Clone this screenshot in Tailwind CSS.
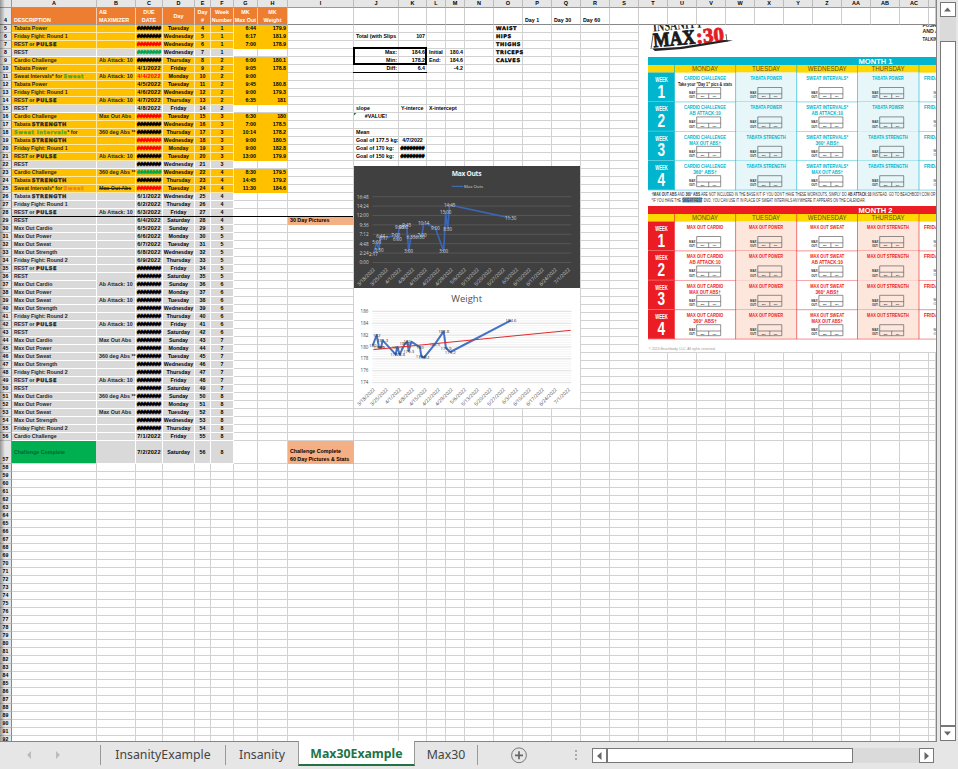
<!DOCTYPE html>
<html lang="en">
<head>
<meta charset="utf-8">
<title>Max30Example</title>
<script src="https://cdn.jsdelivr.net/npm/@tailwindcss/browser@4"></script>
</head>
<body class="w-[958px] h-[769px] overflow-hidden bg-[#e6e6e6] font-['Liberation_Sans',sans-serif]">
<div class="flex flex-col w-[958px] h-[769px] relative">
  <div class="flex h-[742px]">
    <main class="relative w-[937px] h-[742px] bg-white overflow-hidden border-r border-b border-[#868686]">
      <div id="sheet" class="flex flex-col w-[936px] text-[5.3px] leading-[7px] font-bold text-black"></div>
      <div class="absolute left-[12px] top-[216px] w-[341px] h-px bg-black"></div>
      <div class="absolute left-[353px] top-[47px] w-[74px] h-[18px] border-2 border-black"></div>
      <div class="absolute left-[353px] top-[72px] w-[74px] h-px bg-black"></div>
      <svg class="absolute left-[354px] top-[113px]" width="3" height="3"><path d="M0 0H2.5L0 2.5Z" fill="#16803a"/></svg>
      <svg id="maxouts" class="absolute left-[354px] top-[166px]" width="226" height="122" viewBox="12 18 678 366" font-family="Open Sans, sans-serif"></svg>
      <svg id="weight" class="absolute left-[354px] top-[288px]" width="226" height="120" viewBox="12 9 678 360" font-family="Open Sans, sans-serif"></svg>
      <svg id="calendar" class="absolute left-[639px] top-[25px]" width="297" height="327" viewBox="639 25 297 327" font-family="Liberation Sans Narrow, Liberation Sans, sans-serif"></svg>
      <div class="absolute left-0 top-0 w-[5px] h-[742px] bg-gradient-to-r from-black/35 to-transparent"></div>
    </main>
    <aside class="flex flex-col w-[21px] pl-[3px] pt-[2px] pr-[2px] bg-[#e6e6e6]">
      <div class="flex items-center justify-center w-[16px] h-[15px] bg-white border border-[#777]"><svg width="8" height="5"><path d="M0 4.5L3.5 0.5L7 4.5Z" fill="#666"/></svg></div>
      <div class="w-[16px] h-[24px] bg-[#dadada]"></div>
      <div class="w-[16px] h-[685px] bg-white border border-[#777]"></div>
      <div class="flex items-center justify-center w-[16px] h-[15px] bg-white border border-[#777]"><svg width="8" height="5"><path d="M0 0.5L3.5 4.5L7 0.5Z" fill="#666"/></svg></div>
    </aside>
  </div>
  <footer class="relative z-10 flex h-[27px] bg-[#e6e6e6] font-['Noto_Sans',sans-serif] text-[12.3px] leading-[25px] text-[#444]">
    <div class="flex items-start pt-[9px] pl-[26px] w-[100px] gap-[23px]">
      <svg width="6" height="8"><path d="M5 0V8L1 4Z" fill="#bbb"/></svg>
      <svg width="6" height="8"><path d="M1 0V8L5 4Z" fill="#bbb"/></svg>
    </div>
    <div class="mt-[3px] h-[20px] w-px bg-[#999]"></div>
    <div class="w-[124px] flex justify-center whitespace-nowrap">InsanityExample</div>
    <div class="mt-[3px] h-[20px] w-px bg-[#999]"></div>
    <div class="w-[72px] flex justify-center whitespace-nowrap">Insanity</div>
    <div class="-mt-px w-[117px] h-[25px] bg-white border-x border-x-[#999] border-b-2 border-b-[#217346] flex justify-center whitespace-nowrap text-[#217346] font-bold">Max30Example</div>
    <div class="w-[62px] flex justify-center whitespace-nowrap">Max30</div>
    <div class="mt-[3px] h-[20px] w-px bg-[#999]"></div>
    <div class="pt-[5px] pl-[32px] w-[92px]"><svg width="18" height="17"><circle cx="9" cy="8.3" r="7.4" fill="none" stroke="#777"/><path d="M9 4.3V12.3M5 8.3H13" stroke="#666" stroke-width="1.7"/></svg></div>
    <div class="flex flex-col gap-[2px] pt-[8px] pl-[5px] w-[22px]"><i class="size-[2px] bg-[#aaa]"></i><i class="size-[2px] bg-[#aaa]"></i><i class="size-[2px] bg-[#aaa]"></i></div>
    <div class="flex mt-[6px] h-[15px]">
      <div class="flex items-center justify-center w-[15px] h-[15px] bg-white border border-[#777]"><svg width="5" height="8"><path d="M4.5 0V8L0 4Z" fill="#666"/></svg></div>
      <div class="w-[246px] h-[15px] bg-white border border-[#777]"></div>
      <div class="w-[66px] h-[15px] bg-[#dadada]"></div>
      <div class="flex items-center justify-center w-[15px] h-[15px] bg-white border border-[#777]"><svg width="5" height="8"><path d="M0.5 0V8L5 4Z" fill="#666"/></svg></div>
    </div>
  </footer>
</div>
<script>
const names = 'A B C D E F G H I J K L M N O P Q R S T U V W X Y Z AA AB AC'.split(' ').concat('');
const GRID = 'grid grid-cols-[12px_85px_39px_27px_32px_16px_23px_24px_30px_66px_45px_28px_19px_19px_repeat(16,29px)_7px] shrink-0 ';
const sheet = document.getElementById('sheet');
const HASH = '<span class="text-[5.3px] tracking-[0.05px] [-webkit-text-stroke:0.45px_currentColor]">########</span>';
const L = 'justify-start pl-[2px] ', C = 'justify-center ', R = 'justify-end pr-px ';
const bold = (t, c) => `<b class="font-['DejaVu_Sans'] font-bold text-[5.1px] tracking-[0.55px] [-webkit-text-stroke:0.3px_currentColor] ${c || ''}">${t}</b>`;
const desc = {5:'Tabata Power',6:'Friday Fight: Round 1',7:'REST or&nbsp;'+bold('PULSE'),8:'REST',9:'Cardio Challenge',10:'Tabata Power',
 11:"Sweat Intervals* for&nbsp;"+bold('Sweat','text-[#4aa52e]'),12:'Tabata Power',13:'Friday Fight: Round 1',14:'REST or&nbsp;'+bold('PULSE'),15:'REST',
 16:'Cardio Challenge',17:'Tabata&nbsp;'+bold('STRENGTH'),18:bold('Sweat Intervals','text-[#4aa52e]')+'* for',19:'Tabata&nbsp;'+bold('STRENGTH'),
 20:'Friday Fight: Round 1',21:'REST or&nbsp;'+bold('PULSE'),22:'REST',23:'Cardio Challenge',24:'Tabata&nbsp;'+bold('STRENGTH'),
 25:"Sweat Intervals* for&nbsp;"+bold('Sweat','text-[#ed7d31]'),26:'Tabata&nbsp;'+bold('STRENGTH'),27:'Friday Fight: Round 1',28:'REST or&nbsp;'+bold('PULSE'),29:'REST',56:'Cardio Challenge',57:'Challenge Complete'};
const cycle = ['Max Out Cardio','Max Out Power','Max Out Sweat','Max Out Strength','Friday Fight: Round 2','REST or&nbsp;'+bold('PULSE'),'REST'];
for (let r = 30; r < 56; r++) desc[r] = cycle[(r - 30) % 7];
const AB = 'Ab Attack: 10', MO = 'Max Out Abs', DG = '360 deg Abs **';
const abs = {9:AB,11:AB,14:AB,16:MO,18:DG,21:AB,23:DG,25:'<s>'+MO+'</s>',28:AB,37:AB,39:AB,42:AB,44:MO,46:DG,49:AB,51:DG,53:MO};
const date = {10:'4/1/2022',11:'4/4/2022',12:'4/5/2022',13:'4/6/2022',14:'4/7/2022',15:'4/8/2022',26:'6/1/2022',27:'6/2/2022',28:'6/3/2022',29:'6/4/2022',30:'6/5/2022',31:'6/6/2022',32:'6/7/2022',33:'6/8/2022',34:'6/9/2022',56:'7/1/2022',57:'7/2/2022'};
const red = [7,11,16,19,20,25], green = [8,23];
const week = ['Sunday','Monday','Tuesday','Wednesday','Thursday','Friday','Saturday'];
const firstDays = [2,3,3,3,4,5,1,2,3,4,5,2,3,4,3,1,2,3,3,4,2,3,4,5,6];
const maxOut = {5:['6:44','179.9'],6:['6:17','181.9'],7:['7:00','178.9'],9:['6:00','180.1'],10:['9:05','178.8'],11:['9:00',''],12:['9:45','180.8'],13:['9:00','179.3'],14:['6:35','181'],16:['6:30','180'],17:['7:00','178.5'],18:['10:14','178.2'],19:['9:00','180.5'],20:['9:00','182.8'],21:['13:00','179.9'],23:['8:30','179.5'],24:['14:45','179.2'],25:['11:30','184.6']};
const side = {6:{10:[L,'Total (with Slips'],11:[R,'107']},8:{10:[R,'Max:'],11:[R,'184.6'],12:[L,'Initial'],13:[R,'180.4']},9:{10:[R,'Min:'],11:[R,'178.2'],12:[L,'End:'],13:[R,'184.6']},
 10:{10:[R,'Diff:'],11:[R,'6.4'],13:[R,'-4.2']},15:{10:[L,'slope'],11:[L,'Y-interce'],12:[L,'X-intercept']},16:{10:[C,'#VALUE!']},18:{10:[L,'Mean']},
 19:{10:[L,'Goal of 177.5 kg:'],11:[C,'4/7/2022']},20:{10:[L,'Goal of 170 kg:'],11:[C,HASH]},21:{10:[L,'Goal of 150 kg:'],11:[C,HASH]}};
const body = ['WAIST','HIPS','THIGHS','TRICEPS','CALVES'];
const base = 'flex items-center whitespace-nowrap min-w-0 border-r border-b ';
const cell = (cls, html) => `<div class="${base}${cls}">${html || ''}</div>`;
let out = `<div class="${GRID}h-[9px]">` + cell('bg-[#e6e6e6] border-[#999]') +
  names.map(n => cell('justify-center bg-[#e6e6e6] border-r-[#bbb] border-b-[#999] text-[5.5px]', n)).join('') + '</div>';
const heads = ['DESCRIPTION','AB<br>MAXIMIZER','DUE<br>DATE','Day','Day<br>#','Week<br>Number','MK<br>Max Out','MK<br>Weight'];
out += `<div class="${GRID}h-[16px]">` + cell('items-end justify-center bg-[#e6e6e6] border-[#888]', '4');
for (let c = 1; c <= 30; c++) {
  if (c <= 8) out += `<div class="flex whitespace-nowrap min-w-0 border-r border-b border-r-[#f7cbac] border-b-[#999] bg-[#ed7d31] text-white text-[5.4px] leading-[8px] ${c < 3 ? 'pl-[2px] items-end' : 'justify-center text-center items-center'}"><span>${heads[c - 1]}</span></div>`;
  else out += cell('items-end pl-[2px] border-r-[#ccc] border-b-[#888]', {16:'Day 1',17:'Day 30',18:'Day 60'}[c]);
}
out += '</div>';
for (let r = 5; r <= 92; r++) {
  out += `<div class="${GRID}${r === 57 ? 'h-[23px]' : 'h-[8px]'}">`;
  out += cell((r === 57 ? 'items-end ' : '') + 'justify-center bg-[#e6e6e6] border-r-[#888] border-b-[#bbb] text-[5.2px]', r);
  for (let c = 1; c <= 30; c++) {
    let k = 'border-[#d2d2d2] ', t = '';
    if (c <= 6 && r <= 57) {
      const yellow = r < 26 && ![8,15,22].includes(r);
      k = yellow ? 'bg-[#ffc000] border-[#ffe9a6] ' : 'bg-[#d9d9d9] border-white ';
      if (c === 1) { k += L + 'text-[#262626] text-[5.2px] '; t = desc[r]; if (r === 57) k = L + 'bg-[#00b050] border-[#d9d9d9] text-[#063] '; }
      if (c === 2) { k += L + 'text-[#262626] '; t = abs[r]; if (r === 36 || r === 37) k = L + 'bg-[#d9d9d9] border-r-white border-b-[#d9d9d9] text-[#262626] '; }
      if (c === 3) { t = date[r] || HASH; k += C + (date[r] ? 'text-[5.6px] tracking-[0.2px] ' : '') + (red.includes(r) ? 'text-[#ff0000] ' : green.includes(r) ? 'text-[#00a650] ' : ''); }
      if (c === 4) { t = week[r < 30 ? firstDays[r - 5] : (r - 30) % 7]; k += C; }
      if (c === 5) { t = r - 1; k += C; }
      if (c === 6) { t = r < 9 ? 1 : r < 16 ? 2 : r < 23 ? 3 : r < 30 ? 4 : r < 37 ? 5 : r < 44 ? 6 : r < 51 ? 7 : 8; k += C; }
    } else if ((c === 7 || c === 8) && maxOut[r]) { k = R + 'bg-[#ffc000] border-[#ffc000] '; t = maxOut[r][c - 7]; }
    else if (c === 9 && r === 29) { k = L + 'bg-[#f4b084] border-[#f4b084] '; t = '30 Day Pictures'; }
    else if (c === 9 && r === 57) { k = L + 'items-end bg-[#f4b084] border-[#f4b084] leading-[8px] '; t = '<span>Challenge Complete<br>60 Day Pictures &amp; Stats</span>'; }
    else if (c === 15 && r < 10) { k += L; t = bold(body[r - 5]); }
    else if (side[r] && side[r][c]) { k += side[r][c][0]; t = side[r][c][1]; }
    out += cell(k, t);
  }
  out += '</div>';
}
sheet.innerHTML = out;

const txt = (x, y, s, size, fill, extra) => `<text x="${x}" y="${y}" font-size="${size}" fill="${fill}" ${extra || ''}>${s}</text>`;
const mid = 'text-anchor="middle" ', end = 'text-anchor="end" ';
const days = ['3/18/2022','3/25/2022','4/1/2022','4/8/2022','4/15/2022','4/22/2022','4/29/2022','5/6/2022','5/13/2022','5/20/2022','5/27/2022','6/3/2022','6/10/2022','6/17/2022','6/24/2022','7/1/2022'];
const axis = (y, fill) => days.map((d, i) => `<text transform="translate(${76 + i * 39} ${y}) rotate(-45)" text-anchor="end" font-size="14.5" fill="${fill}">${d}</text>`).join('');

let m = '<rect x="12" y="17" width="681" height="368" fill="#404040"/>' + txt(350, 48, 'Max Outs', 20, '#f2f2f2', mid + 'font-weight="700" textLength="89"');
m += '<path d="M305 79H340" stroke="#4472c4" stroke-width="3"/>' + txt(342, 84, 'Max Outs', 13, '#ccc', 'textLength="57"');
['16:48','14:24','12:00','9:36','7:12','4:48','2:24','0:00'].forEach((v, i) => {
  const y = 110 + i * 28.2;
  m += `<path d="M67 ${y}H664" stroke="#626262" stroke-width="2"/>` + txt(56, y + 6, v, 14, '#d0d0d0', end);
});
const mp = [[70,284],[80,246],[87,270],[92,228],[100,234],[137,226],[142,238],[148,201],[160,203],[170,196],[176,273],[183,231],[210,231],[216,226],[221,190],[238,194],[256,204],[281,274],[287,157],[293,208],[299,135],[482,174]];
m += `<polyline points="${mp.map(p => p.join()).join(' ')}" fill="none" stroke="#3a66b5" stroke-width="5" stroke-linejoin="round"/>`;
['2:17','5:00','3:30','6:44','6:17','7:00','6:00','9:05','9:00','9:45','3:00','6:35','6:30','7:00','10:14','','9:00','3:00','13:00','8:30','14:45','11:30'].forEach((s, i) => m += txt(mp[i][0], mp[i][1] + 5, s, 13.5, '#d9d9d9', mid));
document.getElementById('maxouts').innerHTML = m + axis(330, '#d0d0d0');

let w = '<rect x="12" y="9" width="681" height="362" fill="#fff"/>' + txt(350, 50, 'Weight', 27, '#505050', mid + 'textLength="92" lengthAdjust="spacingAndGlyphs"');
for (let i = 0; i <= 30; i++) w += `<path d="M67 ${79 + i * 7.13}H664" stroke="${i % 5 ? '#ededed' : '#ccc'}" stroke-width="2"/>`;
[186,184,182,180,178,176,174].forEach((v, i) => w += txt(55, 84 + i * 35.6, v, 13.5, '#444', end));
const wp = [[68,182],[80,150],[87,188],[93,188],[98,166],[137,208],[142,186],[149,208],[165,176],[172,170],[176,198],[184,170],[210,187],[214,214],[222,218],[254,178],[281,139],[288,190],[301,201],[483,106]];
w += `<polyline points="${wp.map(p => p.join()).join(' ')}" fill="none" stroke="#4472c4" stroke-width="6" stroke-linejoin="round"/>`;
['180','182','179.9','180','181.3','178.9','180.1','178.8','180.8','181','179.3','','180','178.5','178.2','180.5','182.8','179.9','179.2','184.6'].forEach((s, i) => w += txt(wp[i][0], wp[i][1] + 5, s, 13, '#333', mid));
w += '<path d="M70 194L662 136" stroke="#e02b2b" stroke-width="3"/>';
document.getElementById('weight').innerHTML = w + axis(315, '#444');

const fit = (x, y, s, size, fill, width, extra) => txt(x, y, s, size, fill, `text-anchor="middle" textLength="${width}" lengthAdjust="spacingAndGlyphs" font-weight="700" ` + (extra || ''));
let k = '<rect x="639" y="25" width="297" height="327" fill="#fff"/>';
k += '<g transform="rotate(-5 678 38)" font-family="Liberation Serif, serif" font-weight="700">' +
  '<text x="654" y="29.5" font-size="14" fill="#222" textLength="50" lengthAdjust="spacingAndGlyphs">INSANITY</text>' +
  '<text x="653" y="45" font-size="20.5" fill="#1a1a1a" textLength="42" lengthAdjust="spacingAndGlyphs" stroke="#1a1a1a" stroke-width=".9">MAX</text>' +
  '<text x="696" y="45" font-size="20.5" fill="#e31b23" textLength="28" lengthAdjust="spacingAndGlyphs" stroke="#e31b23" stroke-width=".9">:30</text></g>' +
  '<path d="M652 48.5L680 47L702 43.5L724 40L733 40.5L725 42L704 45.5L682 49L655 51Z" fill="#222"/><path d="M653 35L651 49M726 34L727 42" stroke="#222" stroke-width=".7"/>';
k += txt(922.5, 26.5, 'PUSHING', 5, '#222', 'font-weight="700"') + txt(922.5, 33.3, 'AND A', 5.2, '#222', 'font-weight="700"') + txt(922.5, 41, 'TALKING', 5.2, '#222', 'font-weight="700" textLength="18" lengthAdjust="spacingAndGlyphs"');
const X = [674.5, 735.6, 796.7, 857.5, 919, 980];
function month(top, title, main, tint, rows) {
  k += `<rect x="648" y="${top}" width="288" height="8.2" fill="${main}"/><rect x="648" y="${top + 8}" width="288" height="7.6" fill="#fdd803"/>`;
  k += fit(875.5, top + 6.6, title, 7, '#fff', 34);
  ['MONDAY','TUESDAY','WEDNESDAY','THURSDAY'].forEach((d, i) => k += txt(X[i] + 30.5, top + 14.2, d, 6.8, '#54501a', `${mid}textLength="${[26,28,39,33][i]}" lengthAdjust="spacingAndGlyphs"`));
  const t0 = top + 15.5, h = 29.4;
  rows.forEach((cells, r) => {
    const y = t0 + r * h;
    cells.forEach((lines, c) => {
      if (c % 2) k += `<rect x="${X[c]}" y="${y}" width="${X[c + 1] - X[c]}" height="${h}" fill="${tint}"/>`;
      if (c === 4) { k += txt(924, y + 7.3, 'FRIDAY', 6.2, main, 'font-weight="700" textLength="17" lengthAdjust="spacingAndGlyphs"') + txt(933.5, y + 21, 'MAX', 3.6, '#333') + txt(933.5, y + 25, 'OUT', 3.6, '#333'); return; }
      const cx = X[c] + 30.5;
      lines.forEach((s, i) => {
        const note = s.startsWith('Take');
        k += fit(cx, y + 7.3 + i * 5.9, s, note ? 5.4 : 6.2, note ? '#222' : main, note ? 54 : s.length * 2.62);
      });
      const bx = X[c] + 22.2, by = y + 15;
      k += `<path d="M${bx} ${by}h24v11h-24zM${bx} ${by + 6.3}h24M${bx + 12} ${by + 6.3}v4.7" fill="none" stroke="#555" stroke-width=".65"/>`;
      k += fit(bx - 4.5, by + 6.3, 'MAX', 4.2, '#333', 6.5) + fit(bx - 4.5, by + 10.7, 'OUT:', 4.2, '#333', 6.5);
      k += fit(bx + 6, by + 9.8, 'MIN.', 2.5, '#333', 4) + fit(bx + 18, by + 9.8, 'SEC.', 2.5, '#333', 4);
    });
    k += `<rect x="648" y="${y}" width="26.4" height="${h}" fill="${main}"/>` + fit(661.5, y + 9.2, 'WEEK', 6.3, '#fff', 12.5);
    k += fit(661.2, y + 25, r + 1, 18.5, '#fff', 7.6);
    k += `<path d="M648 ${y + h}H936" stroke="${main}" stroke-width=".6" opacity=".8"/><path d="M648 ${y + h}H674" stroke="#fff" stroke-width=".7" opacity=".7"/>`;
  });
  X.forEach(x => k += `<path d="M${x} ${top + 8}V${t0 + 4 * h}" stroke="${main}" stroke-width=".6"/>`);
}
month(57, 'MONTH 1', '#00b5cd', '#e6f6f9', [
 [['CARDIO CHALLENGE','Take your "Day 1" pics &amp; stats'],['TABATA POWER'],['SWEAT INTERVALS*'],['TABATA POWER'],[]],
 [['CARDIO CHALLENGE','AB ATTACK:10'],['TABATA POWER'],['SWEAT INTERVALS*','AB ATTACK:10'],['TABATA POWER'],[]],
 [['CARDIO CHALLENGE','MAX OUT ABS†'],['TABATA STRENGTH'],['SWEAT INTERVALS*','360° ABS†'],['TABATA STRENGTH'],[]],
 [['CARDIO CHALLENGE','360° ABS†'],['TABATA STRENGTH'],['SWEAT INTERVALS*','MAX OUT ABS†'],['TABATA STRENGTH'],[]]]);
month(206, 'MONTH 2', '#ec1c24', '#fde6dc', [
 [['MAX OUT CARDIO'],['MAX OUT POWER'],['MAX OUT SWEAT'],['MAX OUT STRENGTH'],[]],
 [['MAX OUT CARDIO','AB ATTACK:10'],['MAX OUT POWER'],['MAX OUT SWEAT','AB ATTACK:10'],['MAX OUT STRENGTH'],[]],
 [['MAX OUT CARDIO','MAX OUT ABS†'],['MAX OUT POWER'],['MAX OUT SWEAT','360° ABS†'],['MAX OUT STRENGTH'],[]],
 [['MAX OUT CARDIO','360° ABS†'],['MAX OUT POWER'],['MAX OUT SWEAT','MAX OUT ABS†'],['MAX OUT STRENGTH'],[]]]);
k += '<rect x="682.5" y="197.3" width="19.5" height="5.2" fill="#6fa3c8"/>';
k += '<text x="651.5" y="196.2" font-size="5" fill="#333" textLength="284" lengthAdjust="spacingAndGlyphs">†<tspan font-weight="700">MAX OUT ABS</tspan> AND <tspan font-weight="700">360° ABS</tspan> ARE NOT INCLUDED IN THE BASE KIT IF YOU DON\'T HAVE THESE WORKOUTS, SIMPLY DO <tspan font-weight="700">AB ATTACK:10</tspan> INSTEAD. GO TO BEACHBODY.COM OR</text>';
k += '<text x="651.5" y="201.8" font-size="5" fill="#333" textLength="214" lengthAdjust="spacingAndGlyphs">*IF YOU HAVE THE SWEAT FEST DVD, YOU CAN USE IT IN PLACE OF SWEAT INTERVALS ANYWHERE IT APPEARS ON THE CALENDAR.</text>';
k += '<text x="648.5" y="350" font-size="4.2" fill="#999" textLength="67" lengthAdjust="spacingAndGlyphs">© 2015 Beachbody, LLC. All rights reserved.</text>';
document.getElementById('calendar').innerHTML = k;
</script>
</body>
</html>
